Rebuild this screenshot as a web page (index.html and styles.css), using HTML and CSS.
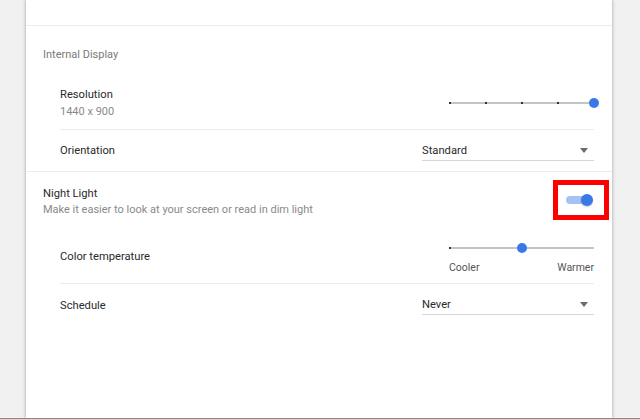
FILE: index.html
```html
<!DOCTYPE html>
<html>
<head>
<meta charset="utf-8">
<link rel="stylesheet" href="styles.css">
</head>
<body>
<div class="card">
  <div class="top"></div>
  <section class="section">
    <div class="header">Internal Display</div>
    <div class="list">
      <div class="row row-res">
        <div class="label">
          <div class="title">Resolution</div>
          <div class="sub">1440 x 900</div>
        </div>
        <div class="slider">
          <div class="track"></div>
          <span class="tick t0"></span>
          <span class="tick t1"></span>
          <span class="tick t2"></span>
          <span class="tick t3"></span>
          <span class="knob k-end"></span>
        </div>
      </div>
      <div class="row row-ori last">
        <div class="title">Orientation</div>
        <div class="dropdown"><span>Standard</span><span class="arrow"></span></div>
      </div>
    </div>
  </section>
  <section class="night">
    <div class="label">
      <div class="title">Night Light</div>
      <div class="sub">Make it easier to look at your screen or read in dim light</div>
    </div>
    <div class="toggle-box">
      <div class="toggle"><span class="toggle-track"></span><span class="toggle-knob"></span></div>
    </div>
  </section>
  <div class="list">
    <div class="row row-temp">
      <div class="title">Color temperature</div>
      <div class="temp">
        <div class="slider">
          <div class="track"></div>
          <span class="tick t0"></span>
          <span class="knob k-mid"></span>
        </div>
        <div class="ends"><span>Cooler</span><span>Warmer</span></div>
      </div>
    </div>
    <div class="row row-sched last">
      <div class="title">Schedule</div>
      <div class="dropdown"><span>Never</span><span class="arrow"></span></div>
    </div>
  </div>
</div>
</body>
</html>
```

FILE: styles.css
```css
html, body {
  margin: 0;
  padding: 0;
  height: 100%;
}
body {
  background: #f1f1f1;
  font-family: Roboto, "Noto Sans", sans-serif;
  font-size: 11px;
  color: #333;
  overflow: hidden;
  border-bottom: 1px solid #8a8a8a;
  box-sizing: border-box;
}
.card {
  margin-left: 26px;
  width: 586px;
  height: 100%;
  background: #fff;
  box-shadow: -1px 0 3px rgba(0,0,0,0.18), 1px 0 3px rgba(0,0,0,0.18);
}
.top {
  height: 25px;
  border-bottom: 1px solid #ececec;
}
.section {
  border-bottom: 1px solid #ececec;
}
.header {
  padding: 19px 0 7px 17px;
  line-height: 20px;
  color: #7a7a7a;
  font-size: 11px;
}
.list {
  padding: 0 18px 0 34px;
}
.row {
  display: flex;
  justify-content: space-between;
  align-items: center;
  border-bottom: 1px solid #ececec;
  box-sizing: border-box;
}
.row.last {
  border-bottom: none;
}
.row-res { height: 58px; padding-top: 4px; }
.row-ori { height: 41px; padding-top: 0; }
.row-temp { height: 56px; padding-top: 2px; }
.row-sched { height: 40px; padding-top: 2px; }
.title {
  font-size: 11.2px;
  line-height: 17px;
  color: #2a2a2a;
}
.sub {
  font-size: 11px;
  line-height: 17px;
  color: #8a8a8a;
}
.night .sub { line-height: 16px; }
.slider {
  position: relative;
  width: 145px;
  height: 12px;
}
.track {
  position: absolute;
  left: 0;
  right: 0;
  top: 5px;
  height: 2px;
  background: #c4c4c4;
}
.tick {
  position: absolute;
  top: 5px;
  width: 2px;
  height: 2px;
  margin-left: -1px;
  background: #333;
}
.t0 { left: 1px; }
.t1 { left: 37px; }
.t2 { left: 73px; }
.t3 { left: 109px; }
.knob {
  position: absolute;
  top: 1px;
  width: 10px;
  height: 10px;
  margin-left: -5px;
  border-radius: 50%;
  background: #3b78e7;
}
.k-end { left: 145px; }
.k-mid { left: 73px; }
.dropdown {
  width: 172px;
  height: 19px;
  display: flex;
  justify-content: space-between;
  align-items: center;
  border-bottom: 1px solid #d6d6d6;
  font-size: 11.2px;
  color: #2a2a2a;
}
.arrow {
  width: 0;
  height: 0;
  margin-right: 6px;
  border-left: 4px solid transparent;
  border-right: 4px solid transparent;
  border-top: 5px solid #6b6b6b;
}
.night {
  height: 56px;
  box-sizing: border-box;
  padding: 2px 18px 0 17px;
  display: flex;
  justify-content: space-between;
  align-items: center;
}
.toggle-box {
  width: 46px;
  height: 30px;
  border: 5px solid #ff0000;
  display: flex;
  align-items: center;
  justify-content: center;
  margin-right: -15px;
  margin-top: -2px;
}
.toggle {
  position: relative;
  width: 27px;
  height: 12px;
  margin-left: -3px;
}
.toggle-track {
  position: absolute;
  left: 0;
  top: 2px;
  width: 26px;
  height: 8px;
  border-radius: 4px;
  background: #a6c2f5;
}
.toggle-knob {
  position: absolute;
  right: 0;
  top: 0;
  width: 12px;
  height: 12px;
  border-radius: 50%;
  background: #3b78e7;
  box-shadow: 0 1px 2px rgba(0,0,0,0.2);
}
.temp {
  width: 145px;
  margin-top: 3px;
}
.ends {
  display: flex;
  justify-content: space-between;
  font-size: 10.5px;
  line-height: 14px;
  color: #555;
  margin-top: 7px;
}
```
